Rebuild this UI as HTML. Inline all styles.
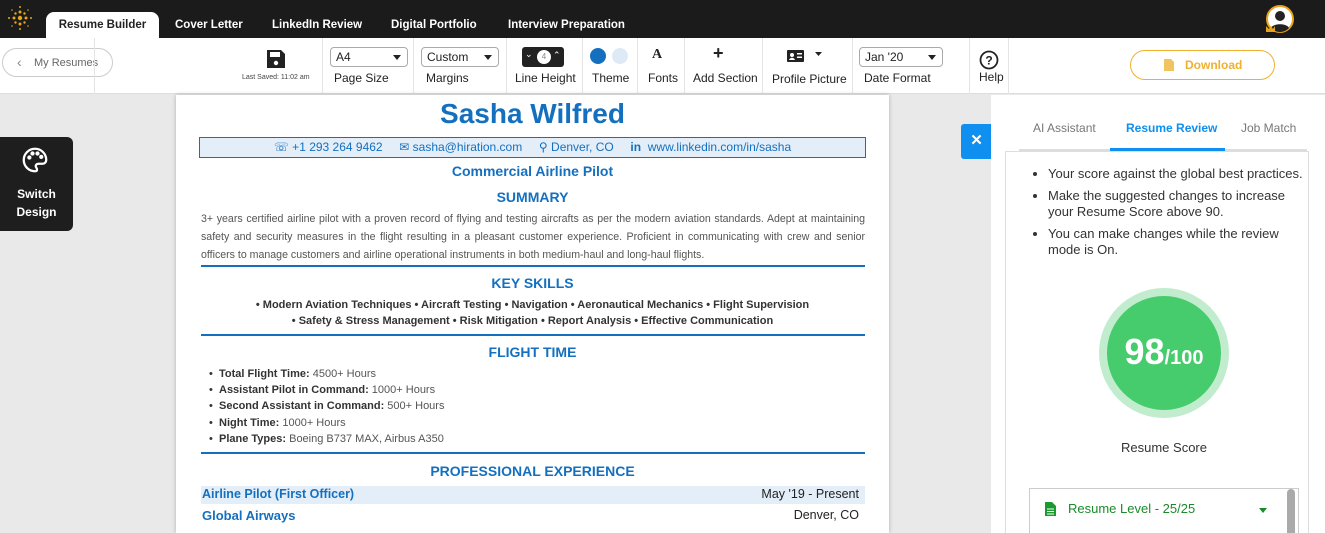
<!DOCTYPE html>
<html style="overflow:hidden"><head><meta charset="utf-8"><style>
*{box-sizing:border-box;margin:0;padding:0}
html,body{width:1325px;height:533px;overflow:hidden}
body{background:#e9e9e9;font-family:"Liberation Sans",sans-serif;position:relative}
.top{position:absolute;left:0;top:0;width:1325px;height:38px;background:#1b1b1b}
.tab{position:absolute;top:12px;height:26px;color:#fff;font-size:11.5px;font-weight:bold;line-height:27px}
.tab.act{background:#fff;color:#222;border-radius:8px 8px 0 0;left:46px;width:113px;text-align:center}
.tb{position:absolute;left:0;top:38px;width:1325px;height:56px;background:#fff;border-bottom:1px solid #ddd}
.sep{position:absolute;top:38px;width:1px;height:56px;background:#e4e4e4}
.lbl{position:absolute;top:71px;font-size:12px;color:#222}
.sel{position:absolute;top:47px;height:20px;border:1px solid #aaa;border-radius:4px;font-size:12px;padding-left:5px;line-height:18px;color:#222}
.sel:after{content:"";position:absolute;right:6px;top:7px;border:4px solid transparent;border-top:5px solid #222}
.paper{position:absolute;left:176px;top:95px;width:713px;height:438px;background:#fff;box-shadow:0 0 4px rgba(0,0,0,.25);overflow:hidden}
.h{position:absolute;left:0;width:713px;text-align:center;font-weight:bold;color:#1470bf;font-size:14px}
.rule{position:absolute;left:25px;width:664px;height:2px;background:#1470bf}
.p{position:absolute;left:25px;width:664px;font-size:10.6px;color:#555;line-height:18px;text-align:justify}
.sk{position:absolute;left:0;width:713px;text-align:center;font-size:11px;font-weight:bold;color:#333}
.li{position:absolute;left:43px;font-size:11px;color:#555}
.li b{color:#333}
.li:before{content:"•";position:absolute;left:-10px;color:#333}
.panel{position:absolute;left:991px;top:95px;width:334px;height:438px;background:#fff;overflow:hidden}
</style></head><body>
<div class="top">
<svg style="position:absolute;left:6px;top:4px" width="28" height="28" viewBox="0 0 28 28" fill="#e8a51a"><circle cx="14" cy="14" r="2.2"/><circle cx="14" cy="8" r="1.5"/><circle cx="14" cy="20" r="1.5"/><circle cx="8" cy="14" r="1.5"/><circle cx="20" cy="14" r="1.5"/><circle cx="9.5" cy="9.5" r="1.2"/><circle cx="18.5" cy="9.5" r="1.2"/><circle cx="9.5" cy="18.5" r="1.2"/><circle cx="18.5" cy="18.5" r="1.2"/><circle cx="14" cy="3" r="1"/><circle cx="14" cy="25" r="1"/><circle cx="3" cy="14" r="1"/><circle cx="25" cy="14" r="1"/><circle cx="6" cy="6" r=".8"/><circle cx="22" cy="6" r=".8"/><circle cx="6" cy="22" r=".8"/><circle cx="22" cy="22" r=".8"/></svg>
<div class="tab act">Resume Builder</div>
<div class="tab" style="left:175px">Cover Letter</div>
<div class="tab" style="left:272px">LinkedIn Review</div>
<div class="tab" style="left:391px">Digital Portfolio</div>
<div class="tab" style="left:508px">Interview Preparation</div>
<svg style="position:absolute;left:1263px;top:4px" width="34" height="32" viewBox="0 0 34 32"><circle cx="17" cy="15" r="13" fill="#fff" stroke="#e8a51a" stroke-width="2"/><circle cx="17" cy="12" r="5" fill="#222"/><path d="M8 24c2-5 16-5 18 0a12 12 0 0 1-18 0z" fill="#222"/><path d="M3 22l3 3 2-3 2 3 2-3v6H3z" fill="#e8a51a"/></svg>
</div>
<div class="tb"></div>
<div style="position:absolute;left:2px;top:48px;width:111px;height:29px;border:1px solid #ccc;border-radius:15px;font-size:11px;color:#666;line-height:29px;padding-left:31px">My Resumes<span style="position:absolute;left:14px;top:-1px;color:#888;font-size:14px">‹</span></div>
<div class="sep" style="left:94px"></div>
<svg style="position:absolute;left:266px;top:49px" width="20" height="20" viewBox="0 0 20 20"><path d="M1 1h14l4 4v14H1z" fill="#222"/><rect x="4" y="3" width="10" height="5" fill="#fff"/><circle cx="10" cy="14" r="2.2" fill="#fff"/></svg>
<div style="position:absolute;left:242px;top:74px;font-size:7px;color:#444">Last Saved: 11:02 am</div>
<div class="sep" style="left:322px"></div>
<div class="sel" style="left:330px;width:78px">A4</div><div class="lbl" style="left:334px">Page Size</div>
<div class="sep" style="left:413px"></div>
<div class="sel" style="left:421px;width:78px">Custom</div><div class="lbl" style="left:426px">Margins</div>
<div class="sep" style="left:506px"></div>
<div style="position:absolute;left:522px;top:47px;width:42px;height:20px;background:#222;border-radius:3px"></div>
<div style="position:absolute;left:537px;top:50px;width:14px;height:14px;border-radius:50%;background:#fff;font-size:8px;color:#888;text-align:center;line-height:14px">4</div>
<div style="position:absolute;left:525px;top:49px;color:#fff;font-size:9px">⌄</div><div style="position:absolute;left:553px;top:50px;color:#fff;font-size:9px">⌃</div>
<div class="lbl" style="left:515px">Line Height</div>
<div class="sep" style="left:582px"></div>
<div style="position:absolute;left:590px;top:48px;width:16px;height:16px;border-radius:50%;background:#1470bf"></div>
<div style="position:absolute;left:612px;top:48px;width:16px;height:16px;border-radius:50%;background:#dde9f5"></div>
<div class="lbl" style="left:592px">Theme</div>
<div class="sep" style="left:637px"></div>
<div style="position:absolute;left:652px;top:47px;font-size:14px;font-weight:bold;color:#222;font-family:'Liberation Serif',serif">A</div>
<div class="lbl" style="left:648px">Fonts</div>
<div class="sep" style="left:684px"></div>
<div style="position:absolute;left:713px;top:43px;font-size:18px;font-weight:bold;color:#222">+</div>
<div class="lbl" style="left:693px">Add Section</div>
<div class="sep" style="left:762px"></div>
<svg style="position:absolute;left:787px;top:49px" width="40" height="14"><rect x="0" y="1" width="17" height="12" rx="1" fill="#222"/><circle cx="5" cy="6" r="2" fill="#fff"/><path d="M2 11c1-3 5-3 6 0z" fill="#fff"/><rect x="10" y="4" width="5" height="1.5" fill="#fff"/><rect x="10" y="7.5" width="5" height="1.5" fill="#fff"/><path d="M28 3h7l-3.5 4z" fill="#222"/></svg>
<div class="lbl" style="left:772px;top:72px">Profile Picture</div>
<div class="sep" style="left:852px"></div>
<div class="sel" style="left:859px;width:84px">Jan '20</div><div class="lbl" style="left:864px">Date Format</div>
<div class="sep" style="left:969px"></div>
<svg style="position:absolute;left:979px;top:50px" width="20" height="20"><circle cx="10" cy="10" r="8.5" fill="none" stroke="#222" stroke-width="1.8"/><text x="10" y="14.5" font-size="12" font-weight="bold" text-anchor="middle" fill="#222" font-family="Liberation Sans">?</text></svg>
<div class="lbl" style="left:979px;top:70px">Help</div>
<div class="sep" style="left:1008px"></div>
<div style="position:absolute;left:1130px;top:50px;width:145px;height:30px;border:1px solid #f0b030;border-radius:15px;color:#f0b030;font-size:12px;font-weight:bold;line-height:28px;padding-left:54px">Download<svg style="position:absolute;left:33px;top:8px" width="10" height="12"><path d="M0 0h7l3 3v9H0z" fill="#f2c460"/></svg></div>

<div style="position:absolute;left:0;top:137px;width:73px;height:94px;background:#1e1e1e;border-radius:0 6px 6px 0;color:#fff;font-size:12px;font-weight:bold;text-align:center;line-height:18px;padding-top:48px">Switch<br>Design</div>
<svg style="position:absolute;left:20px;top:145px" width="30" height="30" viewBox="0 0 24 24" fill="none" stroke="#fff" stroke-width="1.8"><path d="M12 3a9 9 0 0 0 0 18c2 0 2-1.5 1-3s0-3 2-3h3a3 3 0 0 0 3-3c0-5-4-9-9-9z"/><circle cx="7.5" cy="10" r=".8" fill="#fff"/><circle cx="10" cy="6.8" r=".8" fill="#fff"/><circle cx="14" cy="6.8" r=".8" fill="#fff"/><circle cx="17" cy="9.5" r=".8" fill="#fff"/></svg>

<div class="paper">
<div class="h" style="top:3px;font-size:28px">Sasha Wilfred</div>
<div style="position:absolute;left:23px;top:42px;width:667px;height:21px;background:#e3eef8;border:1px solid #1470bf;font-size:12px;color:#1470bf;line-height:19px;text-align:center">☏ +1 293 264 9462 &nbsp;&nbsp;&nbsp; ✉ sasha@hiration.com &nbsp;&nbsp;&nbsp; ⚲ Denver, CO &nbsp;&nbsp;&nbsp; <b>in</b> &nbsp;www.linkedin.com/in/sasha</div>
<div class="h" style="top:68px">Commercial Airline Pilot</div>
<div class="h" style="top:94px">SUMMARY</div>
<div class="p" style="top:115px">3+ years certified airline pilot with a proven record of flying and testing aircrafts as per the modern aviation standards. Adept at maintaining safety and security measures in the flight resulting in a pleasant customer experience. Proficient in communicating with crew and senior officers to manage customers and airline operational instruments in both medium-haul and long-haul flights.</div>
<div class="rule" style="top:170px"></div>
<div class="h" style="top:180px">KEY SKILLS</div>
<div class="sk" style="top:204px">• Modern Aviation Techniques • Aircraft Testing • Navigation • Aeronautical Mechanics • Flight Supervision</div>
<div class="sk" style="top:220px">• Safety &amp; Stress Management • Risk Mitigation • Report Analysis • Effective Communication</div>
<div class="rule" style="top:239px"></div>
<div class="h" style="top:249px">FLIGHT TIME</div>
<div class="li" style="top:273px"><b>Total Flight Time:</b> 4500+ Hours</div>
<div class="li" style="top:289px"><b>Assistant Pilot in Command:</b> 1000+ Hours</div>
<div class="li" style="top:305px"><b>Second Assistant in Command:</b> 500+ Hours</div>
<div class="li" style="top:322px"><b>Night Time:</b> 1000+ Hours</div>
<div class="li" style="top:338px"><b>Plane Types:</b> Boeing B737 MAX, Airbus A350</div>
<div class="rule" style="top:357px"></div>
<div class="h" style="top:368px">PROFESSIONAL EXPERIENCE</div>
<div style="position:absolute;left:25px;top:391px;width:664px;height:18px;background:#e3eef8"></div>
<div style="position:absolute;left:26px;top:392px;font-size:12.5px;font-weight:bold;color:#1470bf">Airline Pilot (First Officer)</div>
<div style="position:absolute;right:30px;top:392px;font-size:12.5px;color:#222">May '19 - Present</div>
<div style="position:absolute;left:26px;top:413px;font-size:13px;font-weight:bold;color:#1470bf">Global Airways</div>
<div style="position:absolute;right:30px;top:413px;font-size:12.5px;color:#222">Denver, CO</div>
</div>

<div style="position:absolute;left:961px;top:124px;width:31px;height:35px;background:#0f8ff0;border-radius:3px 0 0 3px;color:#fff;font-weight:bold;font-size:15px;text-align:center;line-height:34px">✕</div>
<div class="panel">
<div style="position:absolute;left:42px;top:26px;font-size:12px;color:#777">AI Assistant</div>
<div style="position:absolute;left:135px;top:26px;font-size:12px;color:#0f8ff0;font-weight:bold">Resume Review</div>
<div style="position:absolute;left:250px;top:26px;font-size:12px;color:#777">Job Match</div>
<div style="position:absolute;left:28px;top:54px;width:288px;height:2px;background:#ddd"></div>
<div style="position:absolute;left:119px;top:53px;width:115px;height:3px;background:#0f8ff0"></div>
<div style="position:absolute;left:14px;top:56px;width:304px;height:400px;border:1px solid #ddd"></div>
<ul style="position:absolute;left:57px;top:71px;width:258px;font-size:13px;color:#333;line-height:16px">
<li style="margin-bottom:6px">Your score against the global best practices.</li>
<li style="margin-bottom:6px">Make the suggested changes to increase your Resume Score above 90.</li>
<li>You can make changes while the review mode is On.</li></ul>
<div style="position:absolute;left:108px;top:193px;width:130px;height:130px;border-radius:50%;background:#c2ecce"></div>
<div style="position:absolute;left:116px;top:201px;width:114px;height:114px;border-radius:50%;background:#46cc6c;color:#fff;text-align:center;line-height:112px;font-weight:bold;font-size:36px">98<span style="font-size:20px">/100</span></div>
<div style="position:absolute;left:0;width:346px;top:345px;text-align:center;font-size:13px;color:#333">Resume Score</div>
<div style="position:absolute;left:38px;top:393px;width:270px;height:60px;border:1px solid #ccc"></div>
<div style="position:absolute;left:296px;top:394px;width:8px;height:50px;background:#aaa;border-radius:4px"></div>
<svg style="position:absolute;left:54px;top:407px" width="11" height="14"><path d="M0 0h7l4 4v10H0z" fill="#1a9a30"/><path d="M2 7h7M2 9.5h7M2 12h7" stroke="#fff"/></svg>
<div style="position:absolute;left:77px;top:406px;font-size:13px;color:#1a8a2a">Resume Level - 25/25</div>
<div style="position:absolute;left:268px;top:413px;border:4px solid transparent;border-top:5px solid #1a8a2a"></div>
</div>
</body></html>
